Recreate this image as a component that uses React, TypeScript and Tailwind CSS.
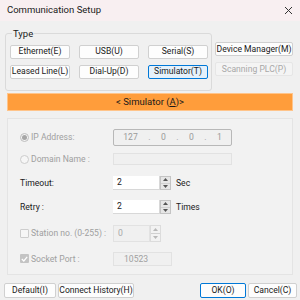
import React from "react";

function Btn({
  label,
  className = "",
}: {
  label: React.ReactNode;
  className?: string;
}) {
  return (
    <button
      className={
        "h-[14px] flex items-center justify-center whitespace-nowrap rounded-[2px] border leading-none " +
        className
      }
    >
      {label}
    </button>
  );
}

function Spin({ disabled = false }: { disabled?: boolean }) {
  const c = disabled ? "#b8b8b8" : "#555";
  return (
    <div
      className={
        "w-[11px] h-full flex flex-col border " +
        (disabled ? "border-[#dcdcdc] bg-[#f2f2f2]" : "border-[#c4c4c4] bg-[#e6e6e6]")
      }
    >
      <div className="flex-1 flex items-center justify-center border-b border-[#d0d0d0]">
        <svg width="5" height="3" viewBox="0 0 5 3">
          <path d="M0 3 L2.5 0 L5 3 Z" fill={c} />
        </svg>
      </div>
      <div className="flex-1 flex items-center justify-center">
        <svg width="5" height="3" viewBox="0 0 5 3">
          <path d="M0 0 L2.5 3 L5 0 Z" fill={c} />
        </svg>
      </div>
    </div>
  );
}

export default function App() {
  const btn = "bg-[#fdfdfd] border-[#d0d0d0] text-[#1a1a1a]";
  return (
    <div className="w-[300px] h-[300px] bg-[#f0f0f0] flex flex-col overflow-hidden font-['Roboto',sans-serif] text-[8.6px] text-[#1a1a1a] whitespace-nowrap">
      {/* title bar */}
      <div className="h-[21px] bg-[#f8eff1] flex items-center justify-between pl-[7px] pr-[7px]">
        <span className="text-[9.5px] text-[#202020]">Communication Setup</span>
        <svg width="9" height="9" viewBox="0 0 9 9">
          <path d="M1 1 L8 8 M8 1 L1 8" stroke="#333" strokeWidth="1" />
        </svg>
      </div>

      {/* type selector */}
      <div className="flex items-start mt-[10px] pl-[5px]">
        <fieldset className="w-[207px] h-[62px] border border-[#dadada] rounded-[3px] pl-[4px] pr-[3px] -mt-[2px] pt-0">
          <legend className="ml-[2px] px-[1px] leading-none text-[9.5px]">Type</legend>
          <div className="grid grid-cols-[60px_60px_60px] gap-x-[9px] gap-y-[6px] mt-[6px]">
            <Btn label="Ethernet(E)" className={btn} />
            <Btn label="USB(U)" className={btn} />
            <Btn label="Serial(S)" className={btn} />
            <Btn label="Leased Line(L)" className={btn} />
            <Btn label="Dial-Up(D)" className={btn} />
            <Btn label="Simulator(T)" className="bg-[#e5f1fb] border-[#0078d7]" />
          </div>
        </fieldset>
        <div className="flex flex-col gap-[6px] ml-[3px] mt-[11px]">
          <Btn label="Device Manager(M)" className={"w-[78px] " + btn} />
          <Btn
            label="Scanning PLC(P)"
            className="w-[78px] bg-[#f4f4f4] border-[#e6e6e6] text-[#a8a8a8]"
          />
        </div>
      </div>

      {/* orange banner */}
      <div className="mx-[7px] mt-[2px] h-[18px] bg-[#ff9d3b] border border-[#ffc48a] flex items-center justify-center text-[9.5px] text-[#1a1a1a]">
        &lt; Simulator (<span className="underline">A</span>)&gt;
      </div>

      {/* settings panel */}
      <div className="mx-[7px] mt-[7px] h-[157px] border border-[#e4e4e4] bg-[#f2f2f2] pl-[12px] pt-[10px] flex flex-col">
        <div className="h-[17px] flex items-center">
          <div className="w-[93px] flex items-center text-[#a0a0a0]">
            <span className="w-[9px] h-[9px] rounded-full border border-[#bdbdbd] bg-[#f4f4f4] flex items-center justify-center mr-[2px]">
              <span className="w-[5px] h-[5px] rounded-full bg-[#a6a6a6]" />
            </span>
            IP Address:
          </div>
          <div className="w-[119px] h-full border border-[#b8b8b8] rounded-[2px] bg-[#f0f0f0] flex items-center justify-around px-[4px] text-[#9a9a9a]">
            <span>127</span>
            <span>.</span>
            <span>0</span>
            <span>.</span>
            <span>0</span>
            <span>.</span>
            <span>1</span>
          </div>
        </div>

        <div className="h-[12px] mt-[7px] flex items-center">
          <div className="w-[93px] flex items-center text-[#a0a0a0]">
            <span className="w-[9px] h-[9px] rounded-full border border-[#cdcdcd] bg-[#f6f6f6] mr-[2px]" />
            Domain Name :
          </div>
          <div className="w-[119px] h-full border border-[#e2e2e2] bg-[#f0f0f0]" />
        </div>

        <div className="h-[14px] mt-[11px] flex items-center">
          <div className="w-[93px]">Timeout:</div>
          <div className="w-[47px] h-full bg-white border-b border-r border-[#d8d8d8] pl-[4px] flex items-center">2</div>
          <Spin />
          <span className="ml-[5px]">Sec</span>
        </div>

        <div className="h-[14px] mt-[10px] flex items-center">
          <div className="w-[93px]">Retry :</div>
          <div className="w-[47px] h-full bg-white border-b border-r border-[#d8d8d8] pl-[4px] flex items-center">2</div>
          <Spin />
          <span className="ml-[5px]">Times</span>
        </div>

        <div className="h-[17px] mt-[11px] flex items-center">
          <div className="w-[93px] flex items-center text-[#a0a0a0]">
            <span className="w-[9px] h-[9px] rounded-[1px] border border-[#cdcdcd] bg-[#f6f6f6] mr-[2px]" />
            Station no. (0-255) :
          </div>
          <div className="w-[37px] h-full border border-[#e2e2e2] bg-[#f0f0f0] pl-[4px] flex items-center text-[#a8a8a8]">0</div>
          <Spin disabled />
        </div>

        <div className="h-[14px] mt-[10px] flex items-center">
          <div className="w-[93px] flex items-center text-[#a0a0a0]">
            <span className="w-[9px] h-[9px] rounded-[1px] bg-[#c4c4c4] flex items-center justify-center mr-[2px]">
              <svg width="7" height="6" viewBox="0 0 7 6">
                <path d="M0.8 3 L2.8 5 L6.2 0.8" stroke="#fff" strokeWidth="1.2" fill="none" />
              </svg>
            </span>
            Socket Port :
          </div>
          <div className="w-[59px] h-full border border-[#e2e2e2] bg-[#f0f0f0] pl-[10px] flex items-center text-[#a0a0a0]">10523</div>
        </div>
      </div>

      {/* bottom buttons */}
      <div className="flex items-center mt-[8px] pl-[4px] pr-[3px]">
        <Btn label="Default(I)" className={"w-[52px] h-[15px] " + btn} />
        <Btn label="Connect History(H)" className={"w-[76px] h-[15px] ml-[2px] " + btn} />
        <div className="flex-1" />
        <Btn label="OK(O)" className="w-[46px] h-[15px] bg-[#fdfdfd] border-[#0078d7]" />
        <Btn label="Cancel(C)" className={"w-[49px] h-[15px] ml-[2px] " + btn} />
      </div>
    </div>
  );
}
